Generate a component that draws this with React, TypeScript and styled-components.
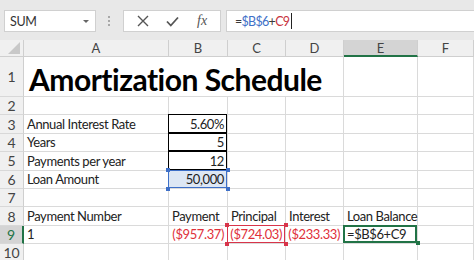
import styled, { createGlobalStyle, css } from "styled-components";

const GlobalStyle = createGlobalStyle`
  html, body { margin: 0; padding: 0; background: #fff; }
  body { font-family: Lato, "Open Sans", sans-serif; overflow: hidden; }
`;

const Sheet = styled.div`
  width: 474px;
  height: 260px;
  overflow: hidden;
  background: #fff;
`;

const FormulaBar = styled.div`
  display: flex;
  align-items: center;
  height: 40px;
  padding: 2px 0 0 4px;
  box-sizing: border-box;
  background: #e8e8e8;
`;

const NameBox = styled.div`
  display: flex;
  align-items: center;
  justify-content: space-between;
  width: 92px;
  height: 22px;
  box-sizing: border-box;
  padding: 0 6px 0 5px;
  background: #fff;
  border: 1px solid #d0d0d0;
  font-size: 12.5px;
  letter-spacing: -0.3px;
  color: #333;
`;

const Caret = styled.span`
  width: 0;
  height: 0;
  border-left: 3px solid transparent;
  border-right: 3px solid transparent;
  border-top: 3px solid #666;
`;

const Grip = styled.div`
  display: flex;
  flex-direction: column;
  gap: 2px;
  margin: 0 13px 0 12px;
  span {
    width: 2px;
    height: 2px;
    background: #a8a8a8;
  }
`;

const ButtonBox = styled.div`
  display: flex;
  align-items: center;
  justify-content: space-around;
  width: 98px;
  height: 22px;
  box-sizing: border-box;
  padding: 0 4px;
  background: #fff;
  border: 1px solid #d0d0d0;
  color: #555;
`;

const Fx = styled.span`
  font-family: "Liberation Serif", serif;
  font-style: italic;
  font-size: 14px;
  color: #555;
`;

const Input = styled.div`
  flex: 1;
  height: 22px;
  box-sizing: border-box;
  margin-left: 5px;
  padding: 0 0 0 8px;
  display: flex;
  align-items: center;
  background: #fff;
  border: 1px solid #d0d0d0;
  border-right: none;
  font-size: 12.5px;
  letter-spacing: -0.7px;
  color: #333;
`;

const Ref = styled.span<{ $c: string }>`
  color: ${({ $c }) => $c};
`;

const Cursor = styled.span`
  display: inline-block;
  width: 1px;
  height: 16px;
  margin-left: 2px;
  background: #222;
`;

const Grid = styled.div`
  display: grid;
  grid-template-columns: 24px 145px 59px 58px 58px 74px 1fr;
  grid-template-rows: 17px 40px repeat(9, 18.4px);
  font-size: 13px;
  letter-spacing: -0.4px;
  color: #222;
`;

const Corner = styled.div`
  position: relative;
  background: #f0f0f0;
  border-right: 1px solid #cfcfcf;
  border-bottom: 1px solid #cfcfcf;
  &::after {
    content: "";
    position: absolute;
    right: 3px;
    bottom: 2px;
    border-left: 12px solid transparent;
    border-bottom: 12px solid #c8c8c8;
  }
`;

const ColHead = styled.div<{ $active?: boolean }>`
  display: flex;
  align-items: center;
  justify-content: center;
  box-sizing: border-box;
  background: ${({ $active }) => ($active ? "#d4d4d4" : "#f0f0f0")};
  border-right: 1px solid #cfcfcf;
  border-bottom: ${({ $active }) => ($active ? "2px solid #217346" : "1px solid #cfcfcf")};
  font-size: 13px;
  letter-spacing: 0;
  color: #444;
`;

const RowHead = styled.div<{ $active?: boolean }>`
  display: flex;
  align-items: center;
  justify-content: center;
  box-sizing: border-box;
  background: ${({ $active }) => ($active ? "#d4d4d4" : "#f0f0f0")};
  border-right: ${({ $active }) => ($active ? "2px solid #217346" : "1px solid #cfcfcf")};
  border-bottom: 1px solid #d8d8d8;
  font-size: 14px;
  letter-spacing: 0;
  color: ${({ $active }) => ($active ? "#217346" : "#444")};
`;

const handles = (c: string) => css`
  &::before {
    content: "";
    position: absolute;
    inset: -3px -3px -3px -3px;
    z-index: 3;
    pointer-events: none;
    background:
      linear-gradient(${c}, ${c}) left top / 4px 4px no-repeat,
      linear-gradient(${c}, ${c}) right top / 4px 4px no-repeat,
      linear-gradient(${c}, ${c}) left bottom / 4px 4px no-repeat,
      linear-gradient(${c}, ${c}) right bottom / 4px 4px no-repeat;
  }
`;

type Mark = "box" | "blue" | "red" | "green";

const Cell = styled.div<{ $right?: boolean; $red?: boolean; $mark?: Mark; $span?: number }>`
  position: relative;
  display: flex;
  align-items: center;
  justify-content: ${({ $right }) => ($right ? "flex-end" : "flex-start")};
  box-sizing: border-box;
  padding: 0 3px 0 3px;
  white-space: nowrap;
  border-right: 1px solid #dadada;
  border-bottom: 1px solid #dadada;
  color: ${({ $red }) => ($red ? "#e0303a" : "#222")};
  ${({ $span }) => $span && css`grid-column: span ${$span};`}
  ${({ $mark }) =>
    $mark === "box" &&
    css`
      &::after {
        content: "";
        position: absolute;
        inset: -1px 0 0 -1px;
        border: 1px solid #000;
        z-index: 1;
      }
    `}
  ${({ $mark }) =>
    $mark === "blue" &&
    css`
      background: #dde7f4;
      &::after {
        content: "";
        position: absolute;
        inset: -1px 0 0 -1px;
        border: 1px solid #3e70c8;
        z-index: 2;
      }
      ${handles("#3e70c8")}
    `}
  ${({ $mark }) =>
    $mark === "red" &&
    css`
      &::after {
        content: "";
        position: absolute;
        inset: -1px 0 0 -1px;
        border: 1px solid #d8344a;
        z-index: 2;
      }
      ${handles("#d8344a")}
    `}
  ${({ $mark }) =>
    $mark === "green" &&
    css`
      &::after {
        content: "";
        position: absolute;
        inset: -1px 0 0 -1px;
        border: 2px solid #217346;
        z-index: 2;
      }
      &::before {
        content: "";
        position: absolute;
        right: -3px;
        bottom: -2px;
        width: 4px;
        height: 4px;
        background: #217346;
        z-index: 3;
      }
    `}
`;

const Title = styled(Cell)`
  font-size: 30px;
  font-weight: 700;
  letter-spacing: -0.5px;
  color: #000;
  padding-left: 5px;
  padding-top: 4px;
`;

const Icon = styled.svg`
  display: block;
`;

const cols = ["A", "B", "C", "D", "E", "F"];

type Row = { n: number; cells: { text?: string; right?: boolean; red?: boolean; mark?: Mark }[] };

const rows: Row[] = [
  { n: 2, cells: [{}, {}, {}, {}, {}, {}] },
  { n: 3, cells: [{ text: "Annual Interest Rate" }, { text: "5.60%", right: true, mark: "box" }, {}, {}, {}, {}] },
  { n: 4, cells: [{ text: "Years" }, { text: "5", right: true, mark: "box" }, {}, {}, {}, {}] },
  { n: 5, cells: [{ text: "Payments per year" }, { text: "12", right: true, mark: "box" }, {}, {}, {}, {}] },
  { n: 6, cells: [{ text: "Loan Amount" }, { text: "50,000", right: true, mark: "blue" }, {}, {}, {}, {}] },
  { n: 7, cells: [{}, {}, {}, {}, {}, {}] },
  {
    n: 8,
    cells: [{ text: "Payment Number" }, { text: "Payment" }, { text: "Principal" }, { text: "Interest" }, { text: "Loan Balance" }, {}],
  },
  {
    n: 9,
    cells: [
      { text: "1" },
      { text: "($957.37)", right: true, red: true },
      { text: "($724.03)", right: true, red: true, mark: "red" },
      { text: "($233.33)", right: true, red: true },
      { text: "=$B$6+C9", mark: "green" },
      {},
    ],
  },
  { n: 10, cells: [{}, {}, {}, {}, {}, {}] },
];

export default function App() {
  return (
    <>
      <GlobalStyle />
      <Sheet>
        <FormulaBar>
          <NameBox>
            SUM
            <Caret />
          </NameBox>
          <Grip>
            <span />
            <span />
            <span />
          </Grip>
          <ButtonBox>
            <Icon width="12" height="12" viewBox="0 0 12 12">
              <path d="M1 1 L11 11 M11 1 L1 11" stroke="#555" strokeWidth="1.4" fill="none" />
            </Icon>
            <Icon width="13" height="11" viewBox="0 0 13 11">
              <path d="M1 5.5 L4.8 9.5 L12 1.5" stroke="#555" strokeWidth="1.8" fill="none" />
            </Icon>
            <Fx>fx</Fx>
          </ButtonBox>
          <Input>
            <Ref $c="#3a3a3a">=</Ref>
            <Ref $c="#3e70c8">$B$6</Ref>
            <Ref $c="#3a3a3a">+</Ref>
            <Ref $c="#c8323c">C9</Ref>
            <Cursor />
          </Input>
        </FormulaBar>
        <Grid>
          <Corner />
          {cols.map((c) => (
            <ColHead key={c} $active={c === "E"}>
              {c}
            </ColHead>
          ))}
          <RowHead>1</RowHead>
          <Title $span={4}>Amortization Schedule</Title>
          <Cell />
          <Cell />
          {rows.map((r) => (
            <Row key={r.n} row={r} />
          ))}
        </Grid>
      </Sheet>
    </>
  );
}

function Row({ row }: { row: Row }) {
  return (
    <>
      <RowHead $active={row.n === 9}>{row.n}</RowHead>
      {row.cells.map((c, i) => (
        <Cell key={i} $right={c.right} $red={c.red} $mark={c.mark}>
          {c.text}
        </Cell>
      ))}
    </>
  );
}
